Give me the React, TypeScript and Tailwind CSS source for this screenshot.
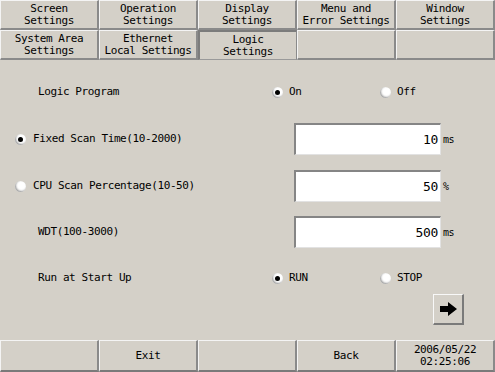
import React from "react";

const font = { fontFamily: '"DejaVu Sans Mono", "Liberation Mono", monospace' };

const tabsTop = [
  ["Screen", "Settings"],
  ["Operation", "Settings"],
  ["Display", "Settings"],
  ["Menu and", "Error Settings"],
  ["Window", "Settings"],
];

const tabsBottom = [
  ["System Area", "Settings"],
  ["Ethernet", "Local Settings"],
  ["Logic", "Settings"],
  null,
  null,
];

function Tab({ lines, active }: { lines: string[] | null; active?: boolean }) {
  return (
    <div
      className={`flex flex-col items-center justify-center h-[30px] text-[11px] leading-[12px] tracking-[-0.4px] text-black ${
        active
          ? "border-t-2 border-l-2 border-b border-r border-t-[#7c7c7c] border-l-[#7c7c7c] border-b-[#9a9a9a] border-r-[#8a8a8a]"
          : "border-t border-l border-b-2 border-r-2 border-t-[#f4f4f4] border-l-[#f4f4f4] border-b-[#8a8a8a] border-r-[#8a8a8a]"
      }`}
    >
      {lines?.map((l) => (
        <span key={l} className="whitespace-pre">{l}</span>
      ))}
    </div>
  );
}

function Radio({ on }: { on?: boolean }) {
  return (
    <span className="relative inline-flex items-center justify-center w-[11px] h-[11px] rounded-full bg-white shadow-[inset_1px_-1px_2px_#9c9c9c] shrink-0">
      {on && <span className="w-[5px] h-[5px] rounded-full bg-black" />}
    </span>
  );
}

function Option({ label, on }: { label: string; on?: boolean }) {
  return (
    <div className="flex items-center gap-[6px] w-[108px]">
      <Radio on={on} />
      <span>{label}</span>
    </div>
  );
}

function ValueBox({ value, unit }: { value: string; unit: string }) {
  return (
    <div className="flex items-center">
      <div className="w-[147px] h-[32px] bg-white flex items-center justify-end pr-[2px] border-t-2 border-l-2 border-b border-r border-t-[#858585] border-l-[#858585] border-b-[#e2e2e2] border-r-[#e2e2e2] text-[13px] tracking-[-0.3px]">
        {value}
      </div>
      <span className="ml-[2px] text-[10px] tracking-[-0.6px]">{unit}</span>
    </div>
  );
}

function BarButton({ children }: { children?: React.ReactNode }) {
  return (
    <div className="flex flex-col items-center justify-center h-[32px] text-[11px] leading-[12px] tracking-[-0.4px] border-t border-l border-b-2 border-r-2 border-t-[#f4f4f4] border-l-[#f4f4f4] border-b-[#7a7a7a] border-r-[#8a8a8a]">
      {children}
    </div>
  );
}

export default function App() {
  return (
    <div className="w-[495px] h-[372px] bg-[#d4d0c8] text-black overflow-hidden flex flex-col" style={font}>
      {/* Tabs */}
      <div className="grid grid-cols-5">
        {tabsTop.map((t, i) => (
          <Tab key={i} lines={t} />
        ))}
        {tabsBottom.map((t, i) => (
          <Tab key={"b" + i} lines={t} active={i === 2} />
        ))}
      </div>

      {/* Content */}
      <div className="h-[280px] flex flex-col pt-[16px] text-[11px] tracking-[-0.4px]">
        <div className="flex items-center h-[32px]">
          <div className="w-[272px] pl-[38px]">Logic Program</div>
          <Option label="On" on />
          <Option label="Off" />
        </div>

        <div className="flex items-center h-[32px] mt-[15px]">
          <div className="w-[294px] pl-[15px] flex items-center gap-[7px]">
            <Radio on />
            <span>Fixed Scan Time(10-2000)</span>
          </div>
          <ValueBox value="10" unit="ms" />
        </div>

        <div className="flex items-center h-[32px] mt-[15px]">
          <div className="w-[294px] pl-[15px] flex items-center gap-[7px]">
            <Radio />
            <span>CPU Scan Percentage(10-50)</span>
          </div>
          <ValueBox value="50" unit="%" />
        </div>

        <div className="flex items-center h-[32px] mt-[14px]">
          <div className="w-[294px] pl-[38px]">WDT(100-3000)</div>
          <ValueBox value="500" unit="ms" />
        </div>

        <div className="flex items-center h-[32px] mt-[14px]">
          <div className="w-[272px] pl-[38px]">Run at Start Up</div>
          <Option label="RUN" on />
          <Option label="STOP" />
        </div>

        <div className="ml-[433px] w-[31px] h-[31px] flex items-center justify-center border-t border-l border-b-2 border-r-2 border-t-[#f8f8f8] border-l-[#f8f8f8] border-b-[#7a7a7a] border-r-[#7a7a7a]">
          <svg width="17" height="14" viewBox="0 0 17 14">
            <polygon points="0,4 8,4 8,0 17,7 8,14 8,10 0,10" fill="#000" />
          </svg>
        </div>
      </div>

      {/* Bottom bar */}
      <div className="grid grid-cols-5">
        <BarButton />
        <BarButton>Exit</BarButton>
        <BarButton />
        <BarButton>Back</BarButton>
        <BarButton>
          <span className="block leading-[12px]">2006/05/22</span>
          <span className="block leading-[12px]">02:25:06</span>
        </BarButton>
      </div>
    </div>
  );
}
